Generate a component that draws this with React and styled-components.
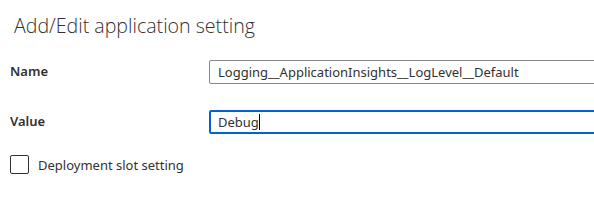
import React from 'react'
import styled, { createGlobalStyle } from 'styled-components'

const Global = createGlobalStyle`
  html, body {
    margin: 0;
    padding: 0;
    background: #fff;
    overflow: hidden;
  }
  body {
    font-family: 'Segoe UI', 'Noto Sans', 'Open Sans', sans-serif;
    color: #323130;
  }
`

const Panel = styled.div`
  width: 594px;
  height: 217px;
  padding: 12px 0 0 10px;
  box-sizing: border-box;
  overflow: hidden;
`

const Title = styled.h2`
  margin: 0 0 20px 4px;
  font-family: 'Open Sans', 'Noto Sans', sans-serif;
  font-size: 19.6px;
  font-weight: 300;
  color: #323130;
  line-height: 28px;
`

const Row = styled.div`
  display: flex;
  align-items: center;
  height: 24px;
  margin-bottom: 26px;
`

const Label = styled.label`
  width: 199px;
  flex: none;
  padding-bottom: 3px;
  font-size: 13px;
  font-weight: 600;
  color: #323130;
`

const Field = styled.div`
  flex: none;
  width: 420px;
  height: 24px;
  box-sizing: border-box;
  border: ${p => (p.$focused ? '2px solid #0063d3' : '1px solid #8a8886')};
  border-radius: 2px;
  padding: 0 ${p => (p.$focused ? '7px' : '8px')};
  display: flex;
  align-items: center;
  font-size: 13px;
  color: #323130;
`

const Caret = styled.span`
  display: inline-block;
  width: 1px;
  height: 16px;
  background: #000;
`

const CheckRow = styled.div`
  display: flex;
  align-items: center;
  gap: 9px;
  margin-top: -5px;
`

const Box = styled.span`
  width: 19px;
  height: 19px;
  box-sizing: border-box;
  border: 1px solid #323130;
  border-radius: 2px;
`

const CheckLabel = styled.span`
  font-size: 13px;
  color: #323130;
`

export default function App() {
  return (
    <>
      <Global />
      <Panel>
        <Title>Add/Edit application setting</Title>
        <Row>
          <Label>Name</Label>
          <Field>Logging__ApplicationInsights__LogLevel__Default</Field>
        </Row>
        <Row>
          <Label>Value</Label>
          <Field $focused>
            Debug<Caret />
          </Field>
        </Row>
        <CheckRow>
          <Box />
          <CheckLabel>Deployment slot setting</CheckLabel>
        </CheckRow>
      </Panel>
    </>
  )
}
